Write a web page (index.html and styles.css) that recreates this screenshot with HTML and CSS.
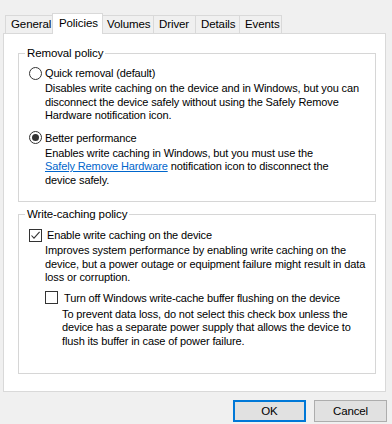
FILE: index.html
```html
<!DOCTYPE html>
<html>
<head>
<meta charset="utf-8">
<link rel="stylesheet" href="styles.css">
</head>
<body>
<div class="dialog">
  <div class="tabs">
    <div class="tab t-general">General</div>
    <div class="tab t-policies selected">Policies</div>
    <div class="tab t-volumes">Volumes</div>
    <div class="tab t-driver">Driver</div>
    <div class="tab t-details">Details</div>
    <div class="tab t-events">Events</div>
  </div>
  <div class="panel">
    <fieldset class="group g1">
      <legend>Removal policy</legend>
      <div class="option">
        <span class="radio"></span>
        <span class="label">Quick removal (default)</span>
      </div>
      <div class="desc">Disables write caching on the device and in Windows, but you can<br>disconnect the device safely without using the Safely Remove<br>Hardware notification icon.</div>
      <div class="option second">
        <span class="radio on"></span>
        <span class="label">Better performance</span>
      </div>
      <div class="desc">Enables write caching in Windows, but you must use the<br><a class="link">Safely Remove Hardware</a> notification icon to disconnect the<br>device safely.</div>
    </fieldset>
    <fieldset class="group g2">
      <legend>Write-caching policy</legend>
      <div class="option">
        <span class="check"><svg width="11" height="11" viewBox="0 0 11 11"><path d="M1.5 5.5 L4 8.2 L9.6 1.8" fill="none" stroke="#333" stroke-width="1.1"/></svg></span>
        <span class="label">Enable write caching on the device</span>
      </div>
      <div class="desc">Improves system performance by enabling write caching on the<br>device, but a power outage or equipment failure might result in data<br>loss or corruption.</div>
      <div class="sub">
        <div class="option">
          <span class="check"></span>
          <span class="label">Turn off Windows write-cache buffer flushing on the device</span>
        </div>
        <div class="desc subdesc">To prevent data loss, do not select this check box unless the<br>device has a separate power supply that allows the device to<br>flush its buffer in case of power failure.</div>
      </div>
    </fieldset>
  </div>
  <div class="buttons">
    <div class="btn ok">OK</div>
    <div class="btn">Cancel</div>
  </div>
</div>
</body>
</html>
```
FILE: styles.css
```css
html, body {
  margin: 0;
  padding: 0;
  background: #f0f0f0;
}
body {
  font-family: "Liberation Sans", Arial, sans-serif;
  font-size: 11px;
  letter-spacing: -0.12px;
  color: #000;
  width: 392px;
  height: 424px;
  overflow: hidden;
}
.dialog {
  padding: 13px 6px 0 3px;
}
.tabs {
  display: flex;
  align-items: flex-end;
  height: 21px;
  padding-left: 2px;
  position: relative;
  z-index: 1;
  margin-bottom: -1px;
}
.tab {
  box-sizing: border-box;
  height: 18px;
  margin-bottom: 1px;
  border: 1px solid #d9d9d9;
  border-bottom: none;
  border-right: none;
  background: #f0f0f0;
  line-height: 17px;
  padding-left: 5px;
  white-space: nowrap;
  font-size: 11.5px;
  letter-spacing: -0.1px;
}
.t-general { width: 48px; }
.t-policies { width: 51px; }
.t-volumes { width: 51px; }
.t-driver { width: 42px; }
.t-details { width: 44px; }
.t-events { width: 43px; border-right: 1px solid #d9d9d9; }
.tab.selected {
  height: 21px;
  margin-bottom: 0;
  margin-left: -1px;
  margin-right: -1px;
  background: #fff;
  border-right: 1px solid #d9d9d9;
  line-height: 18px;
  padding-left: 6px;
  position: relative;
  z-index: 2;
}
.tab.selected + .tab { border-left: none; }
.panel {
  box-sizing: border-box;
  background: #fff;
  border: 1px solid #d9d9d9;
  height: 359px;
  padding: 12px 9px 0 14px;
}
.group {
  margin: 0;
  padding: 0 10px 0 10px;
  border: 1px solid #d6d6d6;
  min-width: 0;
}
.group legend {
  padding: 0 2px;
  margin-left: -4px;
  line-height: 14px;
  font-size: 11.5px;
}
.g1 {
  padding-bottom: 14px;
}
.g2 {
  margin-top: 5px;
  padding-bottom: 25px;
}
.option {
  display: flex;
  align-items: center;
  height: 14px;
  margin-top: 6px;
}
.g2 > .option { margin-top: 7px; }
.option.second { margin-top: 8px; }
.label {
  margin-left: 3px;
  white-space: nowrap;
  font-size: 11px;
  letter-spacing: -0.15px;
}
.radio {
  box-sizing: border-box;
  width: 13px;
  height: 13px;
  border: 1px solid #333;
  border-radius: 50%;
  display: flex;
  align-items: center;
  justify-content: center;
  flex: none;
}
.radio.on::after {
  content: "";
  width: 7px;
  height: 7px;
  border-radius: 50%;
  background: #333;
}
.check {
  box-sizing: border-box;
  width: 13px;
  height: 13px;
  border: 1px solid #333;
  display: flex;
  align-items: center;
  justify-content: center;
  flex: none;
  margin-right: 2px;
}
.desc {
  margin-top: 2px;
  padding-left: 16px;
  line-height: 13.5px;
  white-space: nowrap;
}
.link {
  color: #0066cc;
  text-decoration: underline;
}
.sub {
  padding-left: 16px;
  margin-top: 6px;
}
.sub .label { margin-left: 4px; }
.subdesc {
  padding-left: 17px;
  margin-top: 3px;
}
.buttons {
  display: flex;
  justify-content: flex-end;
  gap: 8px;
  margin-top: 8px;
  margin-right: -1px;
}
.btn {
  box-sizing: border-box;
  width: 73px;
  height: 22px;
  border: 1px solid #adadad;
  background: #e1e1e1;
  display: flex;
  align-items: center;
  justify-content: center;
  font-size: 11.5px;
}
.btn.ok {
  border: 2px solid #0078d7;
}
```
